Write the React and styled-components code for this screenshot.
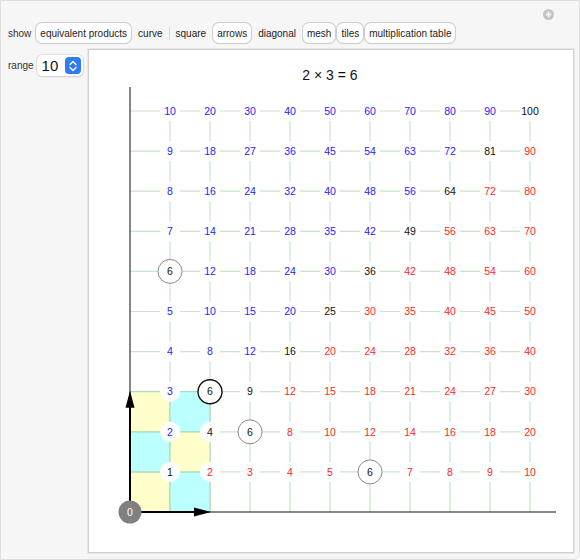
import React from 'react'
import styled, { createGlobalStyle } from 'styled-components'

const GlobalStyle = createGlobalStyle`
  html, body { margin: 0; padding: 0; background: #ffffff; }
  body { font-family: "Liberation Sans", Arial, sans-serif; }
`

const Frame = styled.div`
  box-sizing: border-box;
  width: 580px;
  height: 560px;
  background: #f6f6f6;
  border: 1px solid #dedede;
  border-radius: 0 0 6px 0;
  display: flex;
  flex-direction: column;
`
const Corner = styled.div`
  height: 22px;
  box-sizing: border-box;
  padding: 8px 25px 0 0;
  display: flex;
  justify-content: flex-end;
  align-items: flex-start;
`
const ShowRow = styled.div`
  height: 20px;
  display: flex;
  align-items: center;
  padding-left: 7px;
  gap: 4px;
`
const Label = styled.span`
  font-size: 10px;
  color: #333;
`
const Bar = styled.div`
  display: flex;
  align-items: center;
  height: 20px;
`
const Seg = styled.div`
  box-sizing: border-box;
  height: 20px;
  display: flex;
  align-items: center;
  padding: 0 ${p => (p.$on ? 4 : 5)}px;
  font-size: 10px;
  color: #222;
  border-radius: 6px;
  background: ${p => (p.$on ? '#ffffff' : 'transparent')};
  box-shadow: ${p => (p.$on ? '0 0 0 1px #cdcdcd, 0 1px 1px rgba(0,0,0,0.08)' : 'none')};
  margin: 0 1px;
`
const Divider = styled.div`
  width: 1px;
  height: 13px;
  background: #d6d6d6;
`
const Body = styled.div`
  flex: 1;
  display: flex;
  margin-top: 6px;
`
const Side = styled.div`
  width: 87px;
  box-sizing: border-box;
  padding: 6px 0 0 7px;
`
const RangeRow = styled.div`
  display: flex;
  align-items: center;
  gap: 3px;
`
const Popup = styled.div`
  width: 46px;
  height: 21px;
  box-sizing: border-box;
  display: flex;
  align-items: center;
  justify-content: space-between;
  padding: 0 2px 0 5px;
  background: #fff;
  border-radius: 5px;
  box-shadow: 0 0 0 0.5px #c8c8c8, 0 1px 2px rgba(0,0,0,0.12);
  font-size: 15px;
  color: #111;
`
const Stepper = styled.div`
  width: 16px;
  height: 17px;
  border-radius: 4px;
  background: #2f7cf6;
  display: flex;
  align-items: center;
  justify-content: center;
`
const Panel = styled.div`
  width: 486px;
  height: 504px;
  box-sizing: border-box;
  background: #fff;
  border: 1px solid #cfcfcf;
  box-shadow: 0 0 0 1px #e8e8e8;
`

const X = i => 41 + 40 * i
const Y = j => 462 - 40.1 * j
const BLUE = '#2323ff'
const RED = '#ff1f1f'
const MESH = '#cbe2cb'

const circles = [[1, 6], [3, 2], [6, 1]]

function Chart() {
  const idx = [1, 2, 3, 4, 5, 6, 7, 8, 9, 10]
  const labels = []
  idx.forEach(j => idx.forEach(i => {
    let color = i < j ? BLUE : i > j ? RED : '#111'
    if (i * j === 6) color = '#111'
    labels.push({ i, j, v: i * j, color })
  }))
  const tiles = []
  for (let a = 0; a < 2; a++) {
    for (let b = 0; b < 3; b++) {
      tiles.push({ a, b, fill: (a + b) % 2 === 0 ? '#ffffcc' : '#bcffff' })
    }
  }
  return (
    <svg width="484" height="502" viewBox="0 0 484 502">
      <text x="241" y="30" textAnchor="middle" fontSize="14" fill="#111" fontFamily="Liberation Sans, Arial, sans-serif">
        2 × 3 = 6
      </text>
      {idx.map(j => (
        <line key={'h' + j} x1={X(0)} x2={X(10)} y1={Y(j)} y2={Y(j)} stroke={MESH} strokeWidth="1.2" />
      ))}
      {idx.map(i => (
        <line key={'v' + i} x1={X(i)} x2={X(i)} y1={Y(0)} y2={Y(10)} stroke={MESH} strokeWidth="1.2" />
      ))}
      {tiles.map(t => (
        <rect key={t.a + '-' + t.b} x={X(t.a)} y={Y(t.b + 1)} width="40" height="40.1" fill={t.fill} stroke="#a6d8b0" strokeWidth="1" />
      ))}
      {labels.map(l => (
        <circle key={'d' + l.i + l.j} cx={X(l.i)} cy={Y(l.j)} r="10" fill="#fff" />
      ))}
      {circles.map(([i, j]) => (
        <circle key={'c' + i + j} cx={X(i)} cy={Y(j)} r="12" fill="#fff" stroke="#8a8a8a" strokeWidth="1" />
      ))}
      <circle cx={X(2)} cy={Y(3)} r="12" fill="#fff" stroke="#111" strokeWidth="1.4" />
      {labels.map(l => (
        <text key={'t' + l.i + l.j} x={X(l.i)} y={Y(l.j) + 3.7} textAnchor="middle" fontSize="10.5" fill={l.color} fontFamily="Liberation Sans, Arial, sans-serif">
          {l.v}
        </text>
      ))}
      <line x1={X(0)} x2={X(0)} y1={Y(0)} y2="37" stroke="#111" strokeWidth="1" />
      <line x1={X(0)} x2="467" y1={Y(0)} y2={Y(0)} stroke="#111" strokeWidth="1" />
      <line x1={X(0)} x2={X(0)} y1={Y(0)} y2={Y(3) + 10} stroke="#000" strokeWidth="2" />
      <polygon points={`${X(0)},${Y(3) - 1} ${X(0) - 4.5},${Y(3) + 16} ${X(0) + 4.5},${Y(3) + 16}`} fill="#000" />
      <line x1={X(0)} x2={X(2) - 10} y1={Y(0)} y2={Y(0)} stroke="#000" strokeWidth="2" />
      <polygon points={`${X(2) + 1},${Y(0)} ${X(2) - 16},${Y(0) - 4.5} ${X(2) - 16},${Y(0) + 4.5}`} fill="#000" />
      <circle cx={X(0)} cy={Y(0)} r="11.5" fill="#808080" />
      <text x={X(0)} y={Y(0) + 3.7} textAnchor="middle" fontSize="10.5" fill="#fff" fontFamily="Liberation Sans, Arial, sans-serif">0</text>
    </svg>
  )
}

export default function App() {
  return (
    <>
      <GlobalStyle />
      <Frame>
        <Corner>
          <svg width="11" height="11" viewBox="0 0 11 11">
            <circle cx="5.5" cy="5.5" r="5.5" fill="#c4c4c4" />
            <path d="M5.5 2.8v5.4M2.8 5.5h5.4" stroke="#fff" strokeWidth="1.6" />
          </svg>
        </Corner>
        <ShowRow>
          <Label>show</Label>
          <Bar>
            <Seg $on>equivalent products</Seg>
            <Seg>curve</Seg>
            <Divider />
            <Seg>square</Seg>
            <Seg $on>arrows</Seg>
            <Seg>diagonal</Seg>
            <Seg $on>mesh</Seg>
            <Seg $on>tiles</Seg>
            <Seg $on>multiplication table</Seg>
          </Bar>
        </ShowRow>
        <Body>
          <Side>
            <RangeRow>
              <Label>range</Label>
              <Popup>
                10
                <Stepper>
                  <svg width="8" height="12" viewBox="0 0 8 12">
                    <path d="M1 4.5L4 1.5L7 4.5M1 7.5L4 10.5L7 7.5" fill="none" stroke="#fff" strokeWidth="1.4" strokeLinecap="round" strokeLinejoin="round" />
                  </svg>
                </Stepper>
              </Popup>
            </RangeRow>
          </Side>
          <Panel>
            <Chart />
          </Panel>
        </Body>
      </Frame>
    </>
  )
}
